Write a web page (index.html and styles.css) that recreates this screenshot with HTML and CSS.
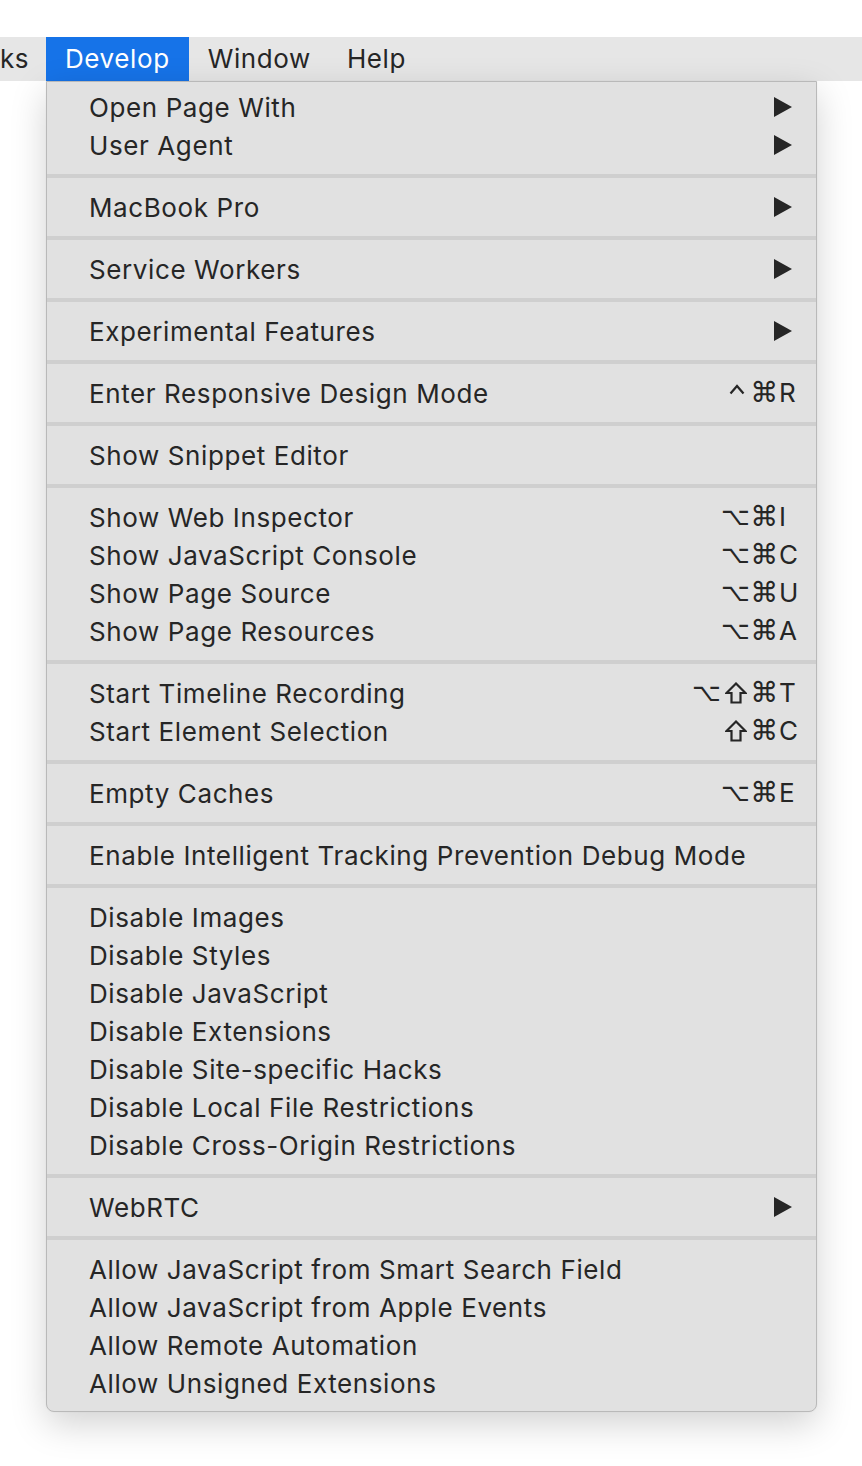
FILE: index.html
```html
<!DOCTYPE html>
<html>
<head>
<meta charset="utf-8">
<link rel="stylesheet" href="styles.css">
</head>
<body>
<div class="menubar">
  <span class="mb-item mb-cut">ks</span>
  <span class="mb-item mb-active">Develop</span>
  <span class="mb-item">Window</span>
  <span class="mb-item mb-help">Help</span>
</div>
<div class="menu">
  <div class="group">
    <div class="row"><span>Open Page With</span><svg class="arrow" viewBox="0 0 18 20"><polygon points="0,0 18,10 0,20"/></svg></div>
    <div class="row"><span>User Agent</span><svg class="arrow" viewBox="0 0 18 20"><polygon points="0,0 18,10 0,20"/></svg></div>
  </div>
  <div class="sep"></div>
  <div class="group">
    <div class="row"><span>MacBook Pro</span><svg class="arrow" viewBox="0 0 18 20"><polygon points="0,0 18,10 0,20"/></svg></div>
  </div>
  <div class="sep"></div>
  <div class="group">
    <div class="row"><span>Service Workers</span><svg class="arrow" viewBox="0 0 18 20"><polygon points="0,0 18,10 0,20"/></svg></div>
  </div>
  <div class="sep"></div>
  <div class="group">
    <div class="row"><span>Experimental Features</span><svg class="arrow" viewBox="0 0 18 20"><polygon points="0,0 18,10 0,20"/></svg></div>
  </div>
  <div class="sep"></div>
  <div class="group">
    <div class="row"><span>Enter Responsive Design Mode</span><span class="sc"><span class="mod"><svg class="ctrl" viewBox="0 0 16 20"><polyline points="1.5,10.5 8,3 14.5,10.5"/></svg></span><span class="mod cmd">⌘</span><span class="key">R</span></span></div>
  </div>
  <div class="sep"></div>
  <div class="group">
    <div class="row"><span>Show Snippet Editor</span></div>
  </div>
  <div class="sep"></div>
  <div class="group">
    <div class="row"><span>Show Web Inspector</span><span class="sc"><span class="mod opt">⌥</span><span class="mod cmd">⌘</span><span class="key">I</span></span></div>
    <div class="row"><span>Show JavaScript Console</span><span class="sc"><span class="mod opt">⌥</span><span class="mod cmd">⌘</span><span class="key">C</span></span></div>
    <div class="row"><span>Show Page Source</span><span class="sc"><span class="mod opt">⌥</span><span class="mod cmd">⌘</span><span class="key">U</span></span></div>
    <div class="row"><span>Show Page Resources</span><span class="sc"><span class="mod opt">⌥</span><span class="mod cmd">⌘</span><span class="key">A</span></span></div>
  </div>
  <div class="sep"></div>
  <div class="group">
    <div class="row"><span>Start Timeline Recording</span><span class="sc"><span class="mod opt">⌥</span><span class="mod"><svg class="shift" viewBox="0 0 22 22"><polygon points="11,1.5 1.5,11 6.5,11 6.5,20.5 15.5,20.5 15.5,11 20.5,11"/></svg></span><span class="mod cmd">⌘</span><span class="key">T</span></span></div>
    <div class="row"><span>Start Element Selection</span><span class="sc"><span class="mod"><svg class="shift" viewBox="0 0 22 22"><polygon points="11,1.5 1.5,11 6.5,11 6.5,20.5 15.5,20.5 15.5,11 20.5,11"/></svg></span><span class="mod cmd">⌘</span><span class="key">C</span></span></div>
  </div>
  <div class="sep"></div>
  <div class="group">
    <div class="row"><span>Empty Caches</span><span class="sc"><span class="mod opt">⌥</span><span class="mod cmd">⌘</span><span class="key">E</span></span></div>
  </div>
  <div class="sep"></div>
  <div class="group">
    <div class="row"><span>Enable Intelligent Tracking Prevention Debug Mode</span></div>
  </div>
  <div class="sep"></div>
  <div class="group">
    <div class="row"><span>Disable Images</span></div>
    <div class="row"><span>Disable Styles</span></div>
    <div class="row"><span>Disable JavaScript</span></div>
    <div class="row"><span>Disable Extensions</span></div>
    <div class="row"><span>Disable Site-specific Hacks</span></div>
    <div class="row"><span>Disable Local File Restrictions</span></div>
    <div class="row"><span>Disable Cross-Origin Restrictions</span></div>
  </div>
  <div class="sep"></div>
  <div class="group">
    <div class="row"><span>WebRTC</span><svg class="arrow" viewBox="0 0 18 20"><polygon points="0,0 18,10 0,20"/></svg></div>
  </div>
  <div class="sep"></div>
  <div class="group">
    <div class="row"><span>Allow JavaScript from Smart Search Field</span></div>
    <div class="row"><span>Allow JavaScript from Apple Events</span></div>
    <div class="row"><span>Allow Remote Automation</span></div>
    <div class="row"><span>Allow Unsigned Extensions</span></div>
  </div>
</div>
</body>
</html>
```

FILE: styles.css
```css
html, body {
  margin: 0;
  padding: 0;
  background: #ffffff;
}
body {
  width: 862px;
  height: 1466px;
  position: relative;
  overflow: hidden;
  font-family: "Inter", "Liberation Sans", sans-serif;
  font-size: 26px;
  letter-spacing: 0.6px;
  color: #262626;
}
.menubar {
  margin-top: 37px;
  height: 44px;
  background: #e6e6e6;
  display: flex;
  align-items: stretch;
}
.mb-item {
  display: flex;
  align-items: center;
  padding: 0 19px;
  line-height: 44px;
}
.mb-cut {
  width: 46px;
  box-sizing: border-box;
  padding: 0;
}
.mb-help {
  padding-left: 17px;
}
.mb-active {
  background: #1673e8;
  color: #ffffff;
}
.menu {
  position: absolute;
  left: 46px;
  top: 81px;
  width: 769px;
  background: #e1e1e1;
  border: 1px solid #b9b9b9;
  border-radius: 0 0 8px 8px;
  padding: 6px 0 9px;
  box-shadow: 0 12px 36px rgba(0, 0, 0, 0.18), 0 0 2px rgba(0, 0, 0, 0.05);
}
.row {
  height: 38px;
  display: flex;
  align-items: center;
  justify-content: space-between;
  padding: 0 17px 0 42px;
}
.sep {
  height: 4px;
  margin: 10px 0;
  background: #cfcfcf;
}
.arrow {
  width: 18px;
  height: 20px;
  fill: #262626;
  margin-right: 7px;
}
.sc {
  display: flex;
  align-items: center;
  font-family: "DejaVu Sans", sans-serif;
  letter-spacing: 0;
}
.mod {
  width: 29px;
  display: flex;
  justify-content: center;
  align-items: center;
  line-height: 38px;
}
.opt {
  font-size: 25px;
}
.cmd {
  font-size: 28px;
}
.ctrl {
  width: 16px;
  height: 20px;
  fill: none;
  stroke: #262626;
  stroke-width: 2.2;
  margin-left: 2px;
}
.shift {
  width: 22px;
  height: 22px;
  fill: none;
  stroke: #262626;
  stroke-width: 2.2;
  stroke-linejoin: miter;
}
.key {
  width: 20px;
  text-align: left;
  font-family: "Inter", sans-serif;
  font-size: 26px;
  line-height: 38px;
}
```
